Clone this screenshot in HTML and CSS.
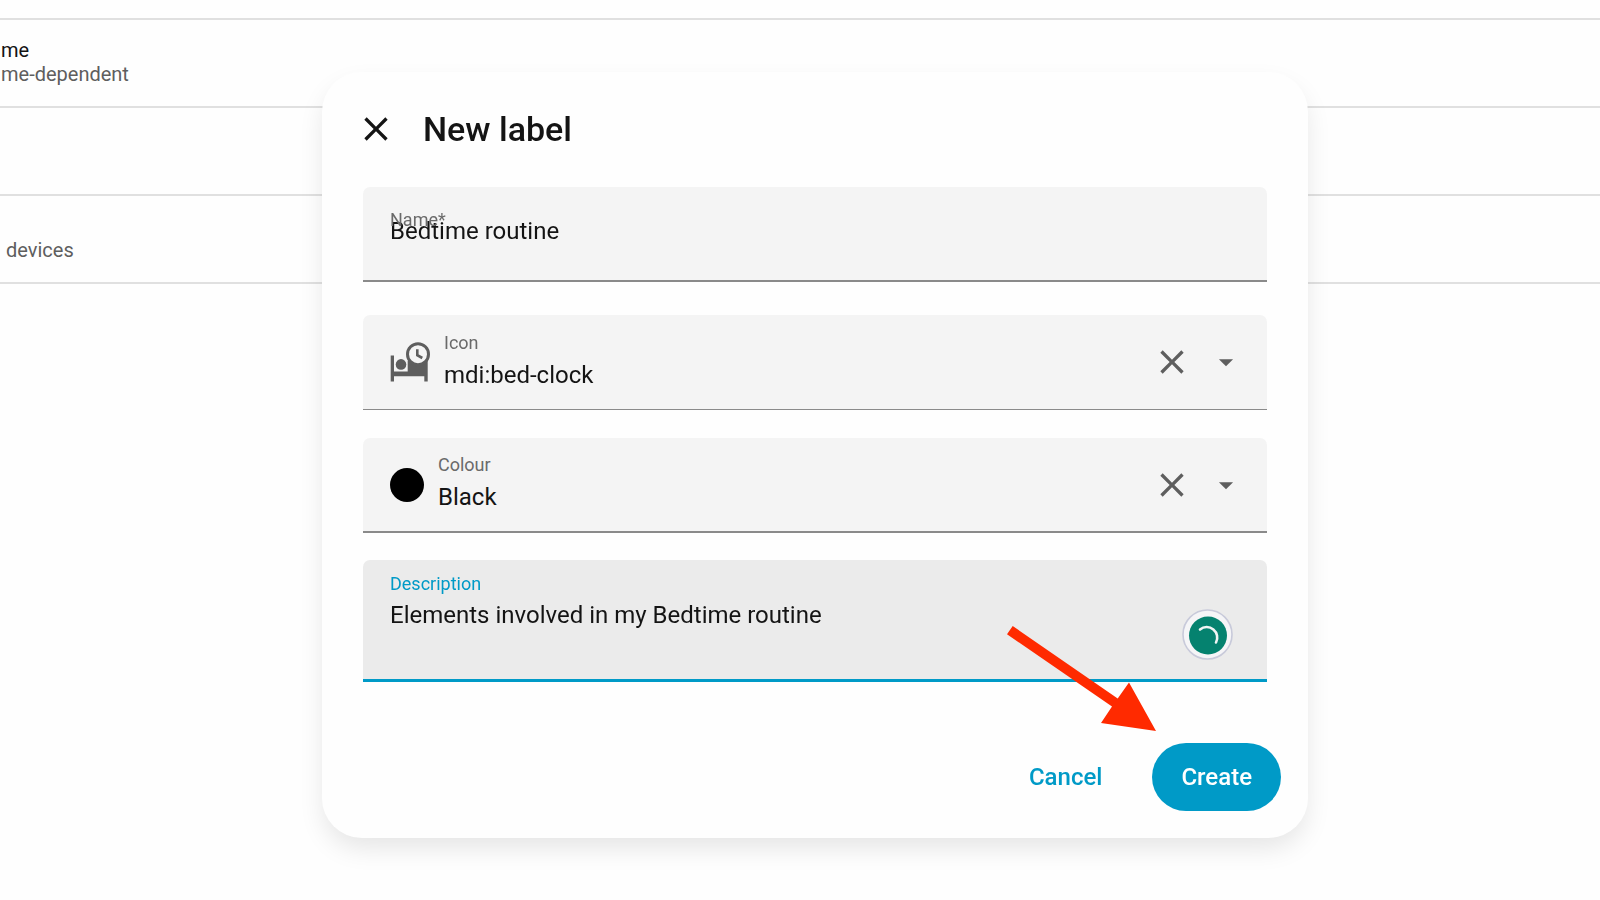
FILE: index.html
```html
<!DOCTYPE html>
<html lang="en-GB">
<head>
<meta charset="utf-8">
<meta name="viewport" content="width=device-width, initial-scale=1">
<title>New label</title>
<link rel="stylesheet" href="styles.css">
</head>
<body>
<main class="list">
  <div class="row"></div>
  <div class="row">
    <div class="row-title">me</div>
    <div class="row-note">me-dependent</div>
  </div>
  <div class="row"></div>
  <div class="row">
    <div class="row-note row-note-inset">devices</div>
  </div>
</main>

<div class="overlay">
  <form class="dialog" role="dialog" aria-labelledby="dialog-title">
    <header class="dialog-header">
      <button class="icon-button close" type="button" aria-label="Close">
        <svg class="icon" viewBox="0 0 24 24"><path d="M19,6.41L17.59,5L12,10.59L6.41,5L5,6.41L10.59,12L5,17.59L6.41,19L12,13.41L17.59,19L19,17.59L13.41,12L19,6.41Z"/></svg>
      </button>
      <h1 class="dialog-title" id="dialog-title">New label</h1>
    </header>

    <div class="field field-name">
      <label class="label label-over" for="name">Name*</label>
      <input class="value" id="name" type="text" value="Bedtime routine" required>
    </div>

    <div class="field field-picker">
      <svg class="lead-icon" viewBox="0 0 40 40" aria-hidden="true">
        <path d="M0.7 13.5H4V29.5H17.7V19H37.7V39.5H34.3V34.3H4V39.5H0.7Z"/>
        <circle cx="11" cy="22.4" r="5.3"/>
        <circle class="clock-face" cx="28" cy="12.2" r="10.5"/>
        <path class="clock-hands" d="M27.3 7.3V13.2L32.3 16"/>
      </svg>
      <div class="stack">
        <label class="label" for="icon">Icon</label>
        <input class="value" id="icon" type="text" role="combobox" aria-expanded="false" value="mdi:bed-clock">
      </div>
      <button class="icon-button" type="button" aria-label="Clear icon">
        <svg class="icon" viewBox="0 0 24 24"><path d="M19,6.41L17.59,5L12,10.59L6.41,5L5,6.41L10.59,12L5,17.59L6.41,19L12,13.41L17.59,19L19,17.59L13.41,12L19,6.41Z"/></svg>
      </button>
      <button class="icon-button arrow-button" type="button" aria-label="Show icons">
        <svg class="icon" viewBox="0 0 24 24"><path d="M7,10L12,15L17,10H7Z"/></svg>
      </button>
    </div>

    <div class="field field-picker field-colour">
      <span class="swatch"></span>
      <div class="stack">
        <label class="label" for="colour">Colour</label>
        <select class="value" id="colour"><option>Black</option></select>
      </div>
      <button class="icon-button" type="button" aria-label="Clear colour">
        <svg class="icon" viewBox="0 0 24 24"><path d="M19,6.41L17.59,5L12,10.59L6.41,5L5,6.41L10.59,12L5,17.59L6.41,19L12,13.41L17.59,19L19,17.59L13.41,12L19,6.41Z"/></svg>
      </button>
      <button class="icon-button arrow-button" type="button" aria-label="Show colours">
        <svg class="icon" viewBox="0 0 24 24"><path d="M7,10L12,15L17,10H7Z"/></svg>
      </button>
    </div>

    <div class="field field-description">
      <label class="label" for="description">Description</label>
      <textarea class="value" id="description" rows="2" spellcheck="false">Elements involved in my Bedtime routine</textarea>
      <svg class="assistant" viewBox="0 0 52 52" aria-hidden="true">
        <circle class="assistant-rim" cx="25.5" cy="25.5" r="24.5"/>
        <circle class="assistant-disc" cx="26" cy="26.5" r="19"/>
        <path class="assistant-arc" d="M18 20.5A10.5 10.5 0 0 1 34 33.5"/>
      </svg>
    </div>

    <footer class="actions">
      <button class="button" type="button">Cancel</button>
      <button class="button button-primary" type="submit">Create</button>
    </footer>

    <svg class="pointer" viewBox="0 0 149 105" aria-hidden="true">
      <path d="M5.7 0L110.7 72.5L122 56.5L149 105L94 97L105 80.5L0 8.3Z"/>
    </svg>
  </form>
</div>
</body>
</html>
```
FILE: styles.css
```css
* {
  box-sizing: border-box;
}

body {
  margin: 0;
  min-height: 100vh;
  background: #fefefe;
  color: #141414;
  font-family: Roboto, "Liberation Sans", sans-serif;
}

.list {
  display: flex;
  flex-direction: column;
}

.row {
  display: flex;
  flex-direction: column;
  justify-content: flex-end;
  min-height: 88px;
  padding: 0 0 20px 1px;
  border-bottom: 2px solid #e0e0e0;
  font-size: 20px;
  line-height: 24px;
}

.row:first-child {
  min-height: 20px;
  padding: 0;
}

.row-note {
  color: #5e5e5e;
}

.row-note-inset {
  padding-left: 5px;
}

.overlay {
  position: fixed;
  inset: 0;
  display: flex;
  align-items: center;
  justify-content: center;
  padding: 10px 0 0 30px;
}

.dialog {
  position: relative;
  width: 100%;
  max-width: 986px;
  padding: 35px 41px 27px;
  border-radius: 40px;
  background: #fefefe;
  box-shadow: 0 12px 26px -2px rgba(0, 0, 0, 0.1);
}

.dialog-header {
  display: flex;
  align-items: center;
  gap: 27px;
  height: 44px;
  margin: 0 0 36px -7px;
}

.dialog-title {
  margin: 0;
  font-size: 34px;
  line-height: 44px;
  font-weight: 500;
}

.icon-button {
  flex: none;
  width: 40px;
  height: 40px;
  padding: 0;
  border: 0;
  background: none;
  color: #5e5e5e;
}

.close {
  color: #141414;
}

.icon {
  display: block;
  width: 100%;
  height: 100%;
  fill: currentColor;
}

.arrow-button {
  width: 34px;
  height: 34px;
  margin-left: 3px;
}

.field {
  position: relative;
  min-height: 95px;
  padding: 0 27px;
  border-bottom: 2px solid #8a8a8a;
  border-radius: 7px 7px 0 0;
  background: #f4f4f4;
}

.label {
  display: block;
  color: #6a6a6a;
  font-size: 18px;
  line-height: 24px;
}

.value {
  display: block;
  width: 100%;
  height: 32px;
  margin: 0;
  padding: 0;
  border: 0;
  outline: 0;
  background: none;
  color: #141414;
  font-family: inherit;
  font-size: 24px;
  line-height: 32px;
  appearance: none;
  resize: none;
}

.field-name {
  margin-bottom: 33px;
  padding-top: 28px;
}

.label-over {
  position: absolute;
  top: 21px;
}

.field-picker {
  display: flex;
  align-items: center;
  gap: 14px;
  margin-bottom: 28px;
  padding-right: 24px;
  border-bottom-width: 1px;
}

.field-colour {
  margin-bottom: 27px;
  border-bottom-width: 2px;
}

.lead-icon {
  flex: none;
  width: 40px;
  height: 40px;
  fill: #5e5e5e;
}

.clock-face {
  fill: #f4f4f4;
  stroke: #5e5e5e;
  stroke-width: 3;
}

.clock-hands {
  fill: none;
  stroke: #5e5e5e;
  stroke-width: 2.6;
}

.swatch {
  flex: none;
  width: 34px;
  height: 34px;
  border-radius: 50%;
  background: #000;
}

.stack {
  display: flex;
  flex: 1;
  flex-direction: column;
  gap: 4px;
  min-width: 0;
  padding-bottom: 3px;
}

.field-description {
  min-height: 122px;
  padding-top: 12px;
  border-bottom: 3px solid #009ac7;
  background: #ebebeb;
}

.field-description .label {
  margin-bottom: 3px;
  color: #009ac7;
}

.field-description .value {
  height: 64px;
}

.assistant {
  position: absolute;
  right: 33px;
  bottom: 18px;
  width: 52px;
  height: 52px;
}

.assistant-rim {
  fill: #f5f5f7;
  stroke: #c8cada;
  stroke-width: 1.6;
}

.assistant-disc {
  fill: #05826f;
}

.assistant-arc {
  fill: none;
  stroke: #f0f5f4;
  stroke-width: 2.6;
  stroke-linecap: round;
}

.actions {
  display: flex;
  justify-content: flex-end;
  gap: 21px;
  margin: 61px -14px 0 0;
}

.button {
  height: 68px;
  padding: 0 29px;
  border: 0;
  border-radius: 34px;
  background: none;
  color: #009ac7;
  font-family: inherit;
  font-size: 24px;
  font-weight: 500;
}

.button-primary {
  background: #009ac7;
  color: #fff;
}

.pointer {
  position: absolute;
  right: 152px;
  bottom: 107px;
  width: 149px;
  height: 105px;
  fill: #ff2a00;
}
```
